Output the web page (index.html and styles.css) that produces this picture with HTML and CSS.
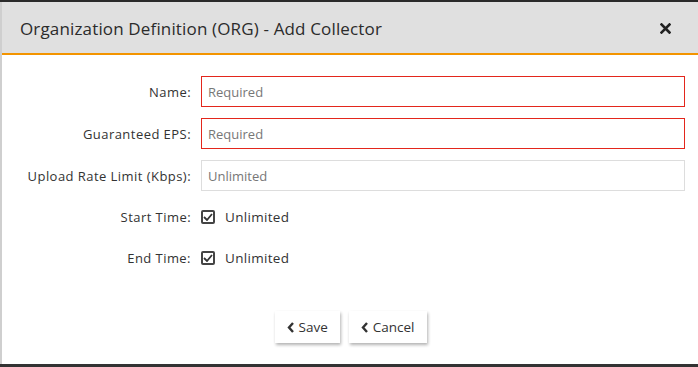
FILE: index.html
```html
<!DOCTYPE html>
<html>
<head>
<meta charset="utf-8">
<link rel="stylesheet" href="styles.css">
</head>
<body>
<div class="backdrop-top"></div>
<div class="dialog">
  <div class="header">
    <div class="title">Organization Definition (ORG) - Add Collector</div>
    <svg class="close" width="11" height="11" viewBox="0 0 11 11"><path d="M1.5 1.5 L9.5 9.5 M9.5 1.5 L1.5 9.5" stroke="#222" stroke-width="2.6" stroke-linecap="square"/></svg>
  </div>
  <div class="body">
    <div class="row">
      <label class="label">Name:</label>
      <div class="field"><input class="input invalid" placeholder="Required"></div>
    </div>
    <div class="row">
      <label class="label">Guaranteed EPS:</label>
      <div class="field"><input class="input invalid" placeholder="Required"></div>
    </div>
    <div class="row">
      <label class="label">Upload Rate Limit (Kbps):</label>
      <div class="field"><input class="input" placeholder="Unlimited"></div>
    </div>
    <div class="row check-row">
      <label class="label">Start Time:</label>
      <div class="field check-field">
        <span class="checkbox"><svg width="10" height="8" viewBox="0 0 10 8"><path d="M1 4 L4 7 L9 1" fill="none" stroke="#333" stroke-width="1.8"/></svg></span>
        <span class="check-text">Unlimited</span>
      </div>
    </div>
    <div class="row check-row">
      <label class="label">End Time:</label>
      <div class="field check-field">
        <span class="checkbox"><svg width="10" height="8" viewBox="0 0 10 8"><path d="M1 4 L4 7 L9 1" fill="none" stroke="#333" stroke-width="1.8"/></svg></span>
        <span class="check-text">Unlimited</span>
      </div>
    </div>
    <div class="buttons">
      <button class="btn"><svg class="chev" width="8" height="11" viewBox="0 0 8 11"><path d="M6 1 L2 5.5 L6 10" fill="none" stroke="#333" stroke-width="2.4"/></svg>Save</button>
      <button class="btn"><svg class="chev" width="8" height="11" viewBox="0 0 8 11"><path d="M6 1 L2 5.5 L6 10" fill="none" stroke="#333" stroke-width="2.4"/></svg>Cancel</button>
    </div>
  </div>
</div>
<div class="backdrop-bottom"></div>
</body>
</html>
```
FILE: styles.css
```css
* { box-sizing: border-box; }
html, body { margin: 0; padding: 0; }
body {
  width: 698px;
  height: 367px;
  overflow: hidden;
  background: #fff;
  font-family: "Open Sans", "Liberation Sans", sans-serif;
  color: #333;
  display: flex;
  flex-direction: column;
}
.backdrop-top { height: 2px; background: #2a2a2a; flex: none; }
.backdrop-bottom { height: 3px; background: #333; flex: none; }
.dialog {
  flex: 1;
  border-left: 2px solid #cfcfcf;
  display: flex;
  flex-direction: column;
}
.header {
  height: 53px;
  background: #e0e0e0;
  border-bottom: 2px solid #f39400;
  display: flex;
  align-items: center;
  justify-content: space-between;
  padding: 0 27px 0 18px;
}
.title {
  font-size: 17px;
  color: #2b2b2b;
  letter-spacing: 0.15px;
  padding-top: 2px;
}
.close { display: block; margin-top: 2px; }
.body {
  flex: 1;
  padding: 21px 12px 0 0;
  display: flex;
  flex-direction: column;
}
.row {
  display: flex;
  align-items: center;
  height: 31px;
  margin-bottom: 11px;
}
.check-row { height: 30px; margin-bottom: 11px; }
.label {
  width: 199px;
  text-align: right;
  font-size: 13px;
  letter-spacing: 0.45px;
  color: #333;
  padding-right: 10px;
  flex: none;
}
.field { flex: 1; }
.input {
  width: 484px;
  height: 31px;
  border: 1px solid #ddd;
  font-family: inherit;
  font-size: 13px;
  padding: 0 6px;
  outline: none;
  color: #333;
  display: block;
}
.input::placeholder { color: #777; }
.input.invalid { border-color: #e3261c; }
.check-field { display: flex; align-items: center; }
.checkbox {
  width: 14px;
  height: 14px;
  border: 2px solid #444;
  border-radius: 2px;
  display: flex;
  align-items: center;
  justify-content: center;
  margin-right: 10px;
}
.checkbox svg { display: block; }
.check-text { font-size: 13.5px; letter-spacing: 0.3px; color: #333; }
.buttons {
  display: flex;
  justify-content: center;
  gap: 9px;
  margin-top: 27px;
  padding-left: 14px;
}
.btn {
  height: 32px;
  background: #fff;
  border: none;
  box-shadow: 1px 2px 3px rgba(0,0,0,0.3);
  font-family: inherit;
  font-size: 13.5px;
  color: #333;
  padding: 0 12px;
  display: flex;
  align-items: center;
  gap: 4px;
}
.btn:last-child { padding-right: 13px; }
.chev { display: block; }
```
